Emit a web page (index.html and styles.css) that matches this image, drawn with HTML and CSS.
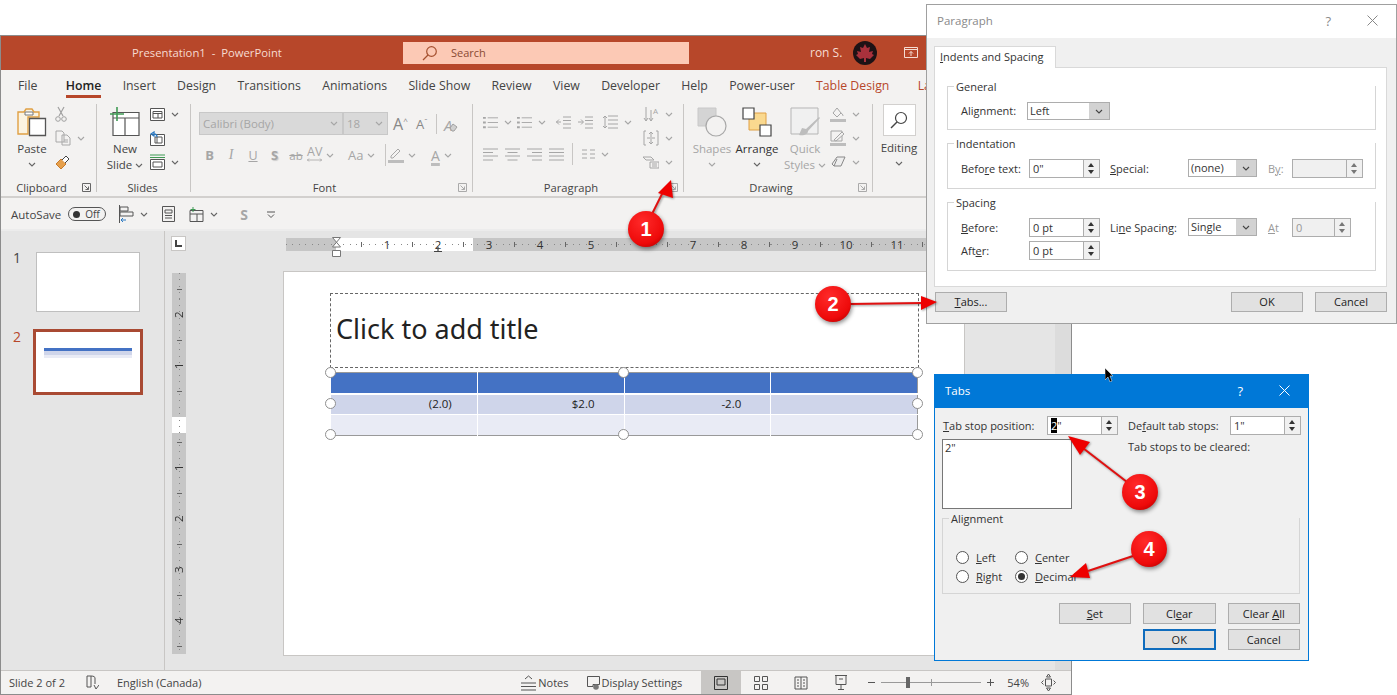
FILE: index.html
```html
<!DOCTYPE html>
<html>
<head>
    <title>Tabs in PowerPoint</title>
    <link rel="stylesheet" href="styles.css">
</head>
<body>
<svg class="defs" width="0" height="0">
    <symbol id="chev" viewBox="0 0 8 5"><path d="M1 1l3 3 3-3" fill="none" stroke="currentColor" stroke-width="1.1"/></symbol>
    <symbol id="launch" viewBox="0 0 9 9"><path d="M.5.5h8v8h-8zM2.5 2.5l4 4M6.5 3.5v3h-3" fill="none" stroke="currentColor"/></symbol>
    <symbol id="list" viewBox="0 0 16 16"><path d="M5 3h11M5 8h11M5 13h11" stroke="currentColor" fill="none"/><path d="M0 2h3v2H0zM0 7h3v2H0zM0 12h3v2H0z" fill="currentColor"/></symbol>
</svg>

<div class="pp">
    <div class="titlebar">
        <span class="doc-title">Presentation1&nbsp; -&nbsp; PowerPoint</span>
        <div class="search">
            <svg width="16" height="16" viewBox="0 0 16 16"><circle cx="9.5" cy="6.5" r="4.8" fill="none" stroke="#a5502f" stroke-width="1.2"/><path d="M6 10l-5 5" stroke="#a5502f" stroke-width="1.3"/></svg>
            <span>Search</span>
        </div>
        <span class="user">ron S.</span>
        <svg class="avatar" width="24" height="24" viewBox="0 0 24 24"><circle cx="12" cy="12" r="12" fill="#1d1215"/><path d="M12 3l2 4 3-1-1 5 4-1-1 3 2 1-4 4-4-1v4h-2v-4l-4 1-4-4 2-1-1-3 4 1-1-5 3 1z" fill="#a8313c"/></svg>
        <svg class="display-btn" width="14" height="11" viewBox="0 0 14 11"><path d="M.5.5h13v10H.5zM.5 2.5h13M7 9V4.5M5 6.5l2-2 2 2" fill="none" stroke="#f5dcd2"/></svg>
    </div>

    <div class="tabs">
        <span class="tab t-file">File</span>
        <span class="tab active">Home</span>
        <span class="tab">Insert</span>
        <span class="tab">Design</span>
        <span class="tab">Transitions</span>
        <span class="tab">Animations</span>
        <span class="tab">Slide Show</span>
        <span class="tab">Review</span>
        <span class="tab">View</span>
        <span class="tab">Developer</span>
        <span class="tab">Help</span>
        <span class="tab">Power-user</span>
        <span class="tab ctx">Table Design</span>
        <span class="tab ctx t-layout">Layout</span>
    </div>

    <div class="ribbon">
        <div class="group g-clip">
            <div class="g-body">
                <div class="big paste">
                    <svg width="30" height="30" viewBox="0 0 30 30"><path d="M1 5h6l2-3h6l2 3h5v5H11v17H1z" fill="#fbf3e2" stroke="#e0a044" stroke-width="1.4"/><path d="M8 5h8v3H8z" fill="#fff" stroke="#777"/><path d="M12.5 11.5h16v17h-16z" fill="#fff" stroke="#555" stroke-width="1.3"/></svg>
                    <span class="lbl">Paste</span>
                    <svg class="chev" width="8" height="5"><use href="#chev"/></svg>
                </div>
                <div class="stack s-clip">
                    <div class="stack-item off"><svg width="12" height="16" viewBox="0 0 12 16"><path d="M3 1l5 9M9 1L4 10" stroke="#a0a0a0" fill="none" stroke-width="1.2"/><circle cx="3" cy="13" r="2.3" fill="none" stroke="#a0a0a0"/><circle cx="9" cy="13" r="2.3" fill="none" stroke="#a0a0a0"/></svg></div>
                    <div class="stack-item off"><svg width="16" height="16" viewBox="0 0 16 16"><path d="M1 1h6l2 2v9H1z M7 5h5l3 3v7H7z" fill="#f3f2f1" stroke="#a8a8a8"/><path d="M9 10h4M9 12h4" stroke="#a8a8a8"/></svg><svg class="chev c-gap" width="8" height="5"><use href="#chev"/></svg></div>
                    <div class="stack-item"><svg width="16" height="16" viewBox="0 0 16 16"><path d="M1 10l5-5 5 5-5 5z" fill="#e6a04c" stroke="#c87b2a"/><path d="M7 6l4-4 3 3-4 4" fill="#fff" stroke="#444"/></svg></div>
                </div>
            </div>
            <div class="g-foot"><span class="g-name">Clipboard</span><svg class="launcher" width="9" height="9"><use href="#launch"/></svg></div>
        </div>

        <div class="group g-slides">
            <div class="g-body">
                <div class="big new-slide">
                    <svg width="30" height="30" viewBox="0 0 30 30"><path d="M3 5.5h26v23H3zM3 11h26M15 11v17" fill="#fff" stroke="#555" stroke-width="1.2"/><path d="M7 0v14M0 7h14" stroke="#3f9a54" stroke-width="1.6"/></svg>
                    <span class="lbl">New</span>
                    <span class="lbl">Slide <svg class="chev" width="8" height="5"><use href="#chev"/></svg></span>
                </div>
                <div class="stack">
                    <div class="stack-item"><svg width="15" height="13" viewBox="0 0 15 13"><path d="M.5.5h14v12H.5zM3 3.500h9V10H3zM3 5.500h9M8 5.500V10" fill="#fff" stroke="#555"/></svg><svg class="chev c-gap" width="8" height="5"><use href="#chev"/></svg></div>
                    <div class="stack-item"><svg width="15" height="15" viewBox="0 0 15 15"><path d="M.5 3.500h14v11H.5zM5 6h7v6H5zM7 6v6" fill="#fff" stroke="#555"/><path d="M1 3l3-2v4zM4 3c2 0 3 1 3 3" fill="none" stroke="#2b79c2" stroke-width="1.3"/></svg></div>
                    <div class="stack-item"><svg width="15" height="16" viewBox="0 0 15 16"><path d="M0 1h15M0 3.500h15" stroke="#3f9a54" stroke-width="1.2"/><path d="M.5 5.500h14v10H.5zM3 8h9v5H3z" fill="#fff" stroke="#555"/></svg><svg class="chev c-gap" width="8" height="5"><use href="#chev"/></svg></div>
                </div>
            </div>
            <div class="g-foot"><span class="g-name">Slides</span></div>
        </div>

        <div class="group g-font">
            <div class="g-body font-body">
                <div class="font-row1">
                    <div class="box box-font">Calibri (Body)<svg class="chev" width="8" height="5"><use href="#chev"/></svg></div>
                    <div class="box box-size">18<svg class="chev" width="8" height="5"><use href="#chev"/></svg></div>
                    <span class="grow-a">A<sup>^</sup></span>
                    <span class="shrink-a">A<sup>ˇ</sup></span>
                    <i class="vsep"></i>
                    <span class="clear-a">A<svg width="9" height="9" viewBox="0 0 9 9"><path d="M1 5l3-4 4 3-3 4H3z" fill="#d0d0d0" stroke="#a0a0a0"/></svg></span>
                </div>
                <div class="font-row2">
                    <b>B</b>
                    <i class="it">I</i>
                    <u>U</u>
                    <b class="shadow-s">S</b>
                    <s>ab</s>
                    <span class="av"><span class="spc">AV<svg width="15" height="4" viewBox="0 0 15 4"><path d="M0 2h15M2 .5L.5 2 2 3.500M13 .5L14.500 2 13 3.500" fill="none" stroke="#a6a6a6" stroke-width=".8"/></svg></span><svg class="chev" width="8" height="5"><use href="#chev"/></svg></span>
                    <span class="av aa"><span>Aa</span><svg class="chev" width="8" height="5"><use href="#chev"/></svg></span>
                    <i class="vsep tall"></i>
                    <span class="av"><svg width="16" height="16" viewBox="0 0 16 16"><path d="M3 9l7-7 2 2-7 7H3z" fill="none" stroke="#a8a8a8"/><path d="M0 13h16v3H0z" fill="#bdbdbd"/></svg><svg class="chev" width="8" height="5"><use href="#chev"/></svg></span>
                    <span class="av"><span class="color-a">A</span><svg class="chev" width="8" height="5"><use href="#chev"/></svg></span>
                </div>
            </div>
            <div class="g-foot"><span class="g-name">Font</span><svg class="launcher dim" width="9" height="9"><use href="#launch"/></svg></div>
        </div>

        <div class="group g-para">
            <div class="g-body">
                <div class="para-left">
                    <div class="para-row r1">
                        <svg width="15" height="15"><use href="#list"/></svg><svg class="chev c-gap" width="8" height="5"><use href="#chev"/></svg>
                        <svg class="m6" width="15" height="15"><use href="#list"/></svg><svg class="chev c-gap" width="8" height="5"><use href="#chev"/></svg>
                        <svg class="m10" width="15" height="13" viewBox="0 0 15 13"><path d="M7 1h8M7 4.500h8M7 8h8M7 12h8M0 6h5M3 3.500L.5 6 3 8.500" fill="none" stroke="currentColor"/></svg>
                        <svg class="m7" width="15" height="13" viewBox="0 0 15 13"><path d="M7 1h8M7 4.500h8M7 8h8M7 12h8M0 6h5M3 3.500L5.500 6 3 8.500" fill="none" stroke="currentColor"/></svg>
                        <svg class="m9" width="16" height="14" viewBox="0 0 16 14"><path d="M6 1h10M6 5h10M6 9h10M6 13h10M3 1v12M1 3l2-2 2 2M1 11l2 2 2-2" fill="none" stroke="currentColor"/></svg><svg class="chev c-gap" width="8" height="5"><use href="#chev"/></svg>
                    </div>
                    <div class="para-row r2">
                        <svg width="15" height="13" viewBox="0 0 15 13"><path d="M0 1h15M0 4.500h10M0 8h15M0 12h10" fill="none" stroke="currentColor"/></svg>
                        <svg class="m7" width="15" height="13" viewBox="0 0 15 13"><path d="M0 1h15M2.500 4.500h10M0 8h15M2.500 12h10" fill="none" stroke="currentColor"/></svg>
                        <svg class="m7" width="15" height="13" viewBox="0 0 15 13"><path d="M0 1h15M5 4.500h10M0 8h15M5 12h10" fill="none" stroke="currentColor"/></svg>
                        <svg class="m7" width="15" height="13" viewBox="0 0 15 13"><path d="M0 1h15M0 4.500h15M0 8h15M0 12h15" fill="none" stroke="currentColor"/></svg>
                        <i class="vsep tall m7"></i>
                        <svg class="m9" width="13" height="10" viewBox="0 0 13 10"><path d="M0 1h5M0 5h5M0 9h5M8 1h5M8 5h5M8 9h5" fill="none" stroke="currentColor"/></svg><svg class="chev c-gap" width="8" height="5"><use href="#chev"/></svg>
                    </div>
                </div>
                <div class="stack s-para off">
                    <div class="stack-item"><svg width="16" height="16" viewBox="0 0 16 16"><path d="M3 1v14M1 12l2 3 2-3M8 4v11M6 12l2 3 2-3" fill="none" stroke="currentColor"/><text x="10" y="8" font-size="8" fill="currentColor">A</text></svg><svg class="chev c-gap" width="8" height="5"><use href="#chev"/></svg></div>
                    <div class="stack-item"><svg width="16" height="16" viewBox="0 0 16 16"><path d="M3 1H1v14h2M13 1h2v14h-2M8 2v5M6 4l2-2 2 2M8 14V9M6 12l2 2 2-2M4 8h8" fill="none" stroke="currentColor"/></svg><svg class="chev c-gap" width="8" height="5"><use href="#chev"/></svg></div>
                    <div class="stack-item"><svg width="16" height="13" viewBox="0 0 16 13"><path d="M0 1h8l3 3H3zM7 6h9v6H7zM9 8h5M9 10h5" fill="none" stroke="currentColor"/></svg><svg class="chev c-gap" width="8" height="5"><use href="#chev"/></svg></div>
                </div>
            </div>
            <div class="g-foot"><span class="g-name">Paragraph</span><svg class="launcher dim" width="9" height="9"><use href="#launch"/></svg></div>
        </div>

        <div class="group g-draw">
            <div class="g-body">
                <div class="big b-shapes off">
                    <svg width="30" height="30" viewBox="0 0 30 30"><path d="M1 1h18v18H1z" fill="#d4d4d4" stroke="#c8c8c8"/><circle cx="19" cy="19" r="10" fill="#f3f2f1" stroke="#a8a8a8" stroke-width="1.2"/></svg>
                    <span class="lbl">Shapes</span>
                    <svg class="chev" width="8" height="5"><use href="#chev"/></svg>
                </div>
                <div class="big b-arrange">
                    <svg width="30" height="30" viewBox="0 0 30 30"><path d="M7 6h17v17H7z" fill="#fad98f" stroke="#e0a044"/><path d="M1 1h11v11H1zM18 18h11v11H18z" fill="#fff" stroke="#444" stroke-width="1.2"/></svg>
                    <span class="lbl">Arrange</span>
                    <svg class="chev" width="8" height="5"><use href="#chev"/></svg>
                </div>
                <div class="big b-quick off">
                    <svg width="30" height="30" viewBox="0 0 30 30"><path d="M1 1h27v26H1z" fill="#f0f0f0" stroke="#b5b5b5"/><path d="M29 10L16 22l-4-1-3 7c5 1 9-1 9-4l12-13z" fill="#bdbdbd"/></svg>
                    <span class="lbl">Quick</span>
                    <span class="lbl">Styles <svg class="chev" width="8" height="5"><use href="#chev"/></svg></span>
                </div>
                <div class="stack s-draw off">
                    <div class="stack-item"><svg width="16" height="16" viewBox="0 0 16 16"><path d="M3 7l4-5 4 5-4 4z M11 7c2 1 2 3 2 3" fill="none" stroke="currentColor"/><path d="M0 13h16v3H0z" fill="#bdbdbd"/></svg><svg class="chev c-gap" width="8" height="5"><use href="#chev"/></svg></div>
                    <div class="stack-item"><svg width="16" height="16" viewBox="0 0 16 16"><path d="M1 1h11v10H1z" fill="none" stroke="currentColor"/><path d="M4 10l8-8 2 2-8 7z" fill="#f3f2f1" stroke="currentColor"/><path d="M0 13h16v3H0z" fill="#bdbdbd"/></svg><svg class="chev c-gap" width="8" height="5"><use href="#chev"/></svg></div>
                    <div class="stack-item"><svg width="16" height="14" viewBox="0 0 16 14"><path d="M2 9l5-7h8l-4 9H4z M4 11l3-7" fill="#eee" stroke="#888"/></svg><svg class="chev c-gap" width="8" height="5"><use href="#chev"/></svg></div>
                </div>
            </div>
            <div class="g-foot"><span class="g-name">Drawing</span><svg class="launcher dim" width="9" height="9"><use href="#launch"/></svg></div>
        </div>

        <div class="big b-edit">
            <div class="edit-box"><svg width="18" height="18" viewBox="0 0 18 18"><circle cx="11" cy="7" r="5.500" fill="none" stroke="#444" stroke-width="1.200"/><path d="M7 11l-6 6" stroke="#444" stroke-width="1.400"/></svg></div>
            <span class="lbl">Editing</span>
            <svg class="chev" width="8" height="5"><use href="#chev"/></svg>
        </div>
    </div>

    <div class="qat">
        <span class="autosave">AutoSave</span>
        <div class="toggle"><i></i><span>Off</span></div>
        <svg class="q-a" width="15" height="18" viewBox="0 0 15 18"><path d="M.5 0v18" stroke="#555"/><path d="M1 2h8v4H1zM1 7h13v4H1z" fill="none" stroke="#555"/><path d="M7 15H2M4 13l-2 2 2 2" fill="none" stroke="#2b79c2"/></svg>
        <svg class="chev c-gap" width="8" height="5"><use href="#chev"/></svg>
        <svg class="q-b" width="13" height="16" viewBox="0 0 13 16"><path d="M.5.500h12v15H.5zM3 4h7v3H3zM3 9.500h7M3 12h7" fill="none" stroke="#555"/></svg>
        <svg class="q-c" width="15" height="15" viewBox="0 0 15 15"><path d="M1 3.500h13v11H1zM1 7h13M8 7v7" fill="none" stroke="#555"/><path d="M4 0v5M1.500 2.500h5" stroke="#3f9a54"/></svg>
        <svg class="chev c-gap" width="8" height="5"><use href="#chev"/></svg>
        <b class="q-s">S</b>
        <svg class="q-more" width="8" height="7" viewBox="0 0 8 7"><path d="M0 1h8M1 3.500l3 3 3-3" fill="none" stroke="#555"/></svg>
    </div>

    <div class="work">
        <div class="thumbs">
            <div class="thumb-row"><span class="num">1</span><div class="thumb"></div></div>
            <div class="thumb-row cur">
                <span class="num">2</span>
                <div class="thumb">
                    <div class="mini">
                        <i class="m-head"></i>
                        <i class="m-row"></i>
                        <i class="m-alt"></i>
                    </div>
                </div>
            </div>
        </div>

        <div class="editor">
            <div class="top-ruler">
                <div class="corner"><svg width="7" height="7" viewBox="0 0 7 7"><path d="M1 0v6h6" fill="none" stroke="#444" stroke-width="2"/></svg></div>
                <div class="h-ruler">
                    <span>1</span><span>2</span><span>3</span><span>4</span><span>5</span><span></span><span>7</span><span>8</span><span>9</span><span>10</span><span>11</span>
                    <svg class="indent" width="9" height="20" viewBox="0 0 9 20"><path d="M.5.500h8L.5 10h8L.5.500M.5 13.500h8v6h-8z" fill="#fff" stroke="#777"/></svg>
                    <svg class="tabmark" width="10" height="5" viewBox="0 0 10 5"><path d="M1 4.500h8M5 0v4" stroke="#444" stroke-width="1.200"/></svg>
                </div>
            </div>
            <div class="canvas">
                <div class="v-ruler">
                    <span>2</span><span>1</span><span class="zero"></span><span>1</span><span>2</span><span>3</span><span>4</span>
                </div>
                <div class="slide">
                    <div class="title-ph">Click to add title</div>
                    <div class="table-wrap">
                        <table class="tbl">
                            <tr class="tr-head"><td></td><td></td><td></td><td></td></tr>
                            <tr class="tr-a"><td class="c1">(2.0)</td><td class="c2">$2.0</td><td class="c3">-2.0</td><td></td></tr>
                            <tr class="tr-b"><td></td><td></td><td></td><td></td></tr>
                        </table>
                        <i class="h h-tl"></i><i class="h h-tc"></i><i class="h h-tr"></i>
                        <i class="h h-ml"></i><i class="h h-mr"></i>
                        <i class="h h-bl"></i><i class="h h-bc"></i><i class="h h-br"></i>
                    </div>
                </div>
                <div class="scroll-gap"></div>
                <div class="scrollbar"></div>
            </div>
        </div>
    </div>

    <div class="status">
        <span class="st-slide">Slide 2 of 2</span>
        <svg class="st-book" width="13" height="15" viewBox="0 0 13 15"><path d="M1 1h4v11H1zM5 1c3 0 4 1 4 2v6M8 10l2 4 3-4" fill="none" stroke="#555"/></svg>
        <span class="st-lang">English (Canada)</span>
        <div class="st-right">
            <svg class="st-notes" width="15" height="16" viewBox="0 0 15 16"><path d="M0 8h15M0 11.500h15M0 15h15M4 4l3.500-3L11 4" fill="none" stroke="#555"/></svg>
            <span class="st-txt">Notes</span>
            <svg class="st-disp" width="13" height="14" viewBox="0 0 13 14"><path d="M.5.500h12v8H6v2H.5z" fill="none" stroke="#555"/><circle cx="9" cy="11" r="2.800" fill="#777"/></svg>
            <span class="st-txt">Display Settings</span>
            <div class="view on"><svg width="14" height="14" viewBox="0 0 14 14"><path d="M.5.500h13v13H.5zM3 3h8v6H3z" fill="none" stroke="#333"/></svg></div>
            <div class="view"><svg width="14" height="14" viewBox="0 0 14 14"><path d="M.5.500h5v5h-5zM8.500.500h5v5h-5zM.5 8.500h5v5h-5zM8.500 8.500h5v5h-5z" fill="none" stroke="#555"/></svg></div>
            <div class="view"><svg width="14" height="14" viewBox="0 0 14 14"><path d="M1 1h12v12H1zM7 1v12M3 4h2M3 7h2M3 10h2M9 4h2M9 7h2M9 10h2" fill="none" stroke="#555"/></svg></div>
            <div class="view"><svg width="14" height="15" viewBox="0 0 14 15"><path d="M1 .500h12M2 .500h10v9H2zM7 9.500V15M4 14.500h6M5 4h4" fill="none" stroke="#555"/></svg></div>
            <div class="zoom">
                <span class="z-minus"></span>
                <div class="z-track"><i class="z-knob"></i><i class="z-mid"></i></div>
                <span class="z-plus"></span>
            </div>
            <span class="st-pct">54%</span>
            <svg class="st-fit" width="15" height="17" viewBox="0 0 15 17"><path d="M4.500 5h6v7h-6zM7.500 0l2 3h-4zM7.500 17l2-3h-4zM2.500 6.500L.5 8.500l2 2M12.500 6.500l2 2-2 2" fill="none" stroke="#555"/></svg>
        </div>
    </div>
</div>

<div class="dialog para-dlg">
    <div class="dlg-title">
        <span>Paragraph</span>
        <span class="dlg-q">?</span>
        <svg class="dlg-x" width="11" height="11" viewBox="0 0 11 11"><path d="M.5.500l10 10M10.500.500l-10 10" stroke="#888"/></svg>
    </div>
    <div class="para-tab"><u>I</u>ndents and Spacing</div>
    <div class="para-panel">
        <div class="grp g-general">
            <span class="legend">General</span>
            <div class="grp-grid g-one">
                <span>Ali<u>g</u>nment:</span>
                <div class="combo c-align"><span>Left</span><i class="combo-btn"><svg class="chev" width="8" height="5"><use href="#chev"/></svg></i></div>
            </div>
        </div>
        <div class="grp g-indent">
            <span class="legend">Indentation</span>
            <div class="grp-grid">
                <span>Befo<u>r</u>e text:</span>
                <div class="spin"><span>0"</span><i class="spin-btn"></i></div>
                <span><u>S</u>pecial:</span>
                <div class="combo"><span>(none)</span><i class="combo-btn"><svg class="chev" width="8" height="5"><use href="#chev"/></svg></i></div>
                <span class="dis">B<u>y</u>:</span>
                <div class="spin dis-box"><span></span><i class="spin-btn"></i></div>
            </div>
        </div>
        <div class="grp g-spacing">
            <span class="legend">Spacing</span>
            <div class="grp-grid">
                <span><u>B</u>efore:</span>
                <div class="spin"><span>0 pt</span><i class="spin-btn"></i></div>
                <span>Li<u>n</u>e Spacing:</span>
                <div class="combo"><span>Single</span><i class="combo-btn"><svg class="chev" width="8" height="5"><use href="#chev"/></svg></i></div>
                <span class="dis"><u>A</u>t</span>
                <div class="spin dis-box s-at"><span class="dis">0</span><i class="spin-btn"></i></div>
                <span>Aft<u>e</u>r:</span>
                <div class="spin"><span>0 pt</span><i class="spin-btn"></i></div>
            </div>
        </div>
    </div>
    <div class="dlg-foot">
        <div class="btn"><u>T</u>abs...</div>
        <div class="btn b-ok">OK</div>
        <div class="btn">Cancel</div>
    </div>
</div>

<div class="dialog tabs-dlg">
    <div class="dlg-title blue">
        <span>Tabs</span>
        <span class="dlg-q">?</span>
        <svg class="dlg-x" width="11" height="11" viewBox="0 0 11 11"><path d="M.5.500l10 10M10.500.500l-10 10" stroke="#fff"/></svg>
    </div>
    <div class="tabs-body">
        <div class="t-row">
            <span class="t-lab1"><u>T</u>ab stop position:</span>
            <div class="spin"><span><mark>2</mark>"</span><i class="spin-btn"></i></div>
            <span class="t-lab2">De<u>f</u>ault tab stops:</span>
            <div class="spin"><span>1"</span><i class="spin-btn"></i></div>
        </div>
        <div class="t-row2">
            <div class="listbox">2"</div>
            <span class="t-clear">Tab stops to be cleared:</span>
        </div>
        <div class="grp g-align">
            <span class="legend">Alignment</span>
            <div class="radios">
                <label class="radio"><i></i><span><u>L</u>eft</span></label>
                <label class="radio"><i></i><span><u>C</u>enter</span></label>
                <label class="radio"><i></i><span><u>R</u>ight</span></label>
                <label class="radio sel"><i></i><span><u>D</u>ecimal</span></label>
            </div>
        </div>
        <div class="t-btns">
            <div class="btn"><u>S</u>et</div>
            <div class="btn">Cl<u>e</u>ar</div>
            <div class="btn">Clear <u>A</u>ll</div>
        </div>
        <div class="t-btns second">
            <div class="btn def">OK</div>
            <div class="btn">Cancel</div>
        </div>
    </div>
</div>

<svg class="cursor" width="9" height="14" viewBox="0 0 9 14"><path d="M0 0l8 8H5l2 5-2 1-2-5-3 3z" fill="#000" stroke="#fff" stroke-width=".5"/></svg>

<svg class="marks" width="1397" height="695" viewBox="0 0 1397 695">
    <defs>
        <radialGradient id="red" cx=".4" cy=".3" r=".8">
            <stop offset="0" stop-color="#ff2a2a"/>
            <stop offset=".75" stop-color="#ee0a0a"/>
            <stop offset="1" stop-color="#c00000"/>
        </radialGradient>
    </defs>
    <g class="arrow">
        <path d="M652 214L664 190" />
        <path d="M671 180L673 198 658 193z" class="head"/>
        <path d="M850 304L922 303"/>
        <path d="M937 302L921 296 921 310z" class="head"/>
        <path d="M1127 482L1079 445"/>
        <path d="M1068 436L1090 442 1080 455z" class="head"/>
        <path d="M1133 556L1088 571"/>
        <path d="M1070 577L1086 563 1090 578z" class="head"/>
    </g>
    <g class="spot">
        <circle cx="646" cy="229" r="18" fill="url(#red)"/>
        <circle cx="833" cy="304" r="18" fill="url(#red)"/>
        <circle cx="1140" cy="492" r="18" fill="url(#red)"/>
        <circle cx="1149" cy="549" r="18" fill="url(#red)"/>
    </g>
    <g class="spot-num">
        <text x="646" y="236">1</text>
        <text x="833" y="311">2</text>
        <text x="1140" y="499">3</text>
        <text x="1149" y="556">4</text>
    </g>
</svg>
</body>
</html>
```

FILE: styles.css
```css
* {
    box-sizing: border-box;
}
html, body {
    margin: 0;
    height: 695px;
    overflow: hidden;
}
body {
    position: relative;
    width: 1397px;
    background: #fff;
    font-family: "Open Sans", "Noto Sans", sans-serif;
    font-size: 12px;
    color: #444;
}
.defs {
    position: absolute;
}
svg {
    display: block;
    flex: none;
}
i {
    font-style: normal;
}

/* powerpoint window */
.pp {
    position: absolute;
    left: 0;
    top: 35px;
    width: 1072px;
    height: 660px;
    border: 1px solid #8c8c8c;
    background: #f3f2f1;
    overflow: hidden;
    display: flex;
    flex-direction: column;
}
.titlebar {
    height: 34px;
    flex: none;
    background: #b7472a;
    color: #f6dcd2;
    display: flex;
    align-items: center;
    padding-bottom: 1px;
    padding-left: 131px;
}
.doc-title {
    width: 271px;
    white-space: nowrap;
    font-size: 11.3px;
}
.search {
    width: 286px;
    height: 22px;
    background: #fcc9b5;
    color: #8a4a33;
    display: flex;
    align-items: center;
    gap: 13px;
    padding-left: 19px;
    font-size: 11px;
}
.user {
    margin-left: 121px;
}
.avatar {
    margin-left: 11px;
}
.display-btn {
    margin-left: 27px;
}

.tabs {
    height: 28px;
    flex: none;
    display: flex;
    gap: 21.3px;
    padding-left: 17px;
    white-space: nowrap;
    font-size: 12.3px;
}
.tab {
    line-height: 31px;
    height: 28px;
}
.t-file {
    margin-right: 7px;
}
.t-layout {
    margin-left: 7px;
}
.tab.active {
    color: #222;
    font-weight: 600;
    border-bottom: 3px solid #b7472a;
}
.ctx {
    color: #b7472a;
}

.ribbon {
    height: 100px;
    flex: none;
    display: flex;
    border-bottom: 2px solid #d2d0ce;
    white-space: nowrap;
}
.group {
    display: flex;
    flex-direction: column;
    height: 98px;
    position: relative;
}
.group::after {
    content: "";
    position: absolute;
    right: 0;
    top: 6px;
    bottom: 4px;
    border-right: 1px solid #c8c6c4;
}
.g-clip { width: 96px; }
.g-slides { width: 94px; }
.g-font { width: 282px; }
.g-para { width: 211px; }
.g-draw { width: 189px; }
.g-body {
    height: 82px;
    display: flex;
    padding-top: 9px;
}
.g-foot {
    height: 15px;
    display: flex;
    align-items: center;
    padding-right: 3px;
}
.g-name {
    flex: 1;
    text-align: center;
    font-size: 11.2px;
}
.launcher {
    color: #666;
    margin-right: 3px;
}
.launcher.dim {
    color: #aaa;
}
.big {
    display: flex;
    flex-direction: column;
    align-items: center;
    flex: none;
    font-size: 11.5px;
}
.big > svg:first-child {
    margin-bottom: 4px;
}
.lbl {
    line-height: 16px;
    display: flex;
    align-items: center;
    gap: 3px;
}
.big .chev {
    margin-top: 5px;
}
.lbl .chev {
    margin-top: 1px !important;
}
.chev {
    width: 8px;
    height: 5px;
    color: #666;
}
.c-gap {
    margin-left: 6px;
}
.stack {
    display: flex;
    flex-direction: column;
    margin-top: -5px;
    flex: none;
}
.stack-item {
    height: 24px;
    display: flex;
    align-items: center;
}
.off, .off .chev, .off .lbl {
    color: #a6a6a6;
}
.paste {
    width: 36px;
    margin-left: 13px;
}
.s-clip {
    margin-left: 5px;
}
.new-slide {
    width: 40px;
    margin-left: 8px;
}
.g-slides .stack {
    margin-left: 5px;
}
.font-body {
    display: block;
    padding-left: 8px;
    padding-top: 14px;
}
.font-row1 {
    display: flex;
    align-items: center;
    height: 23px;
    color: #8a8a8a;
}
.box {
    height: 23px;
    background: #d9d9d9;
    border: 1px solid #c8c8c8;
    color: #a6a6a6;
    display: flex;
    align-items: center;
    justify-content: space-between;
    padding: 0 4px 0 3px;
    font-size: 11.5px;
}
.box .chev {
    color: #a6a6a6;
}
.box-font {
    width: 144px;
}
.box-size {
    width: 45px;
}
.grow-a, .shrink-a {
    font-size: 16px;
    color: #888;
    margin-left: 5px;
    width: 18px;
    line-height: 20px;
}
.shrink-a {
    font-size: 13px;
    margin-left: 5px;
    width: 17px;
}
sup {
    font-size: 8px;
    line-height: 0;
}
.vsep {
    display: block;
    width: 1px;
    height: 20px;
    background: #c8c6c4;
    margin-left: 3px;
    flex: none;
}
.vsep.tall {
    height: 22px;
}
.clear-a {
    margin-left: 7px;
    font-size: 15px;
    font-style: italic;
    color: #a6a6a6;
    display: flex;
    align-items: flex-end;
    margin-top: 3px;
}
.clear-a svg {
    margin-left: -3px;
    margin-bottom: 3px;
}
.font-row2 {
    display: grid;
    grid-template-columns: 21px 22px 22px 21px 22px 37px 38px 6px 37px 37px;
    align-items: center;
    justify-items: center;
    margin-top: 8px;
    height: 24px;
    color: #a6a6a6;
    font-size: 12.5px;
}
.font-row2 .vsep {
    margin: 0;
}
.font-row2 b {
    font-size: 13px;
}
.it {
    font-family: "Liberation Serif", serif;
    font-style: italic;
    font-size: 14px;
}
.shadow-s {
    text-shadow: 1px 1px 1px #ccc;
}
.font-row2 s {
    font-size: 11.5px;
}
.av {
    display: flex;
    align-items: center;
    gap: 4px;
    justify-self: start;
}
.spc {
    display: flex;
    flex-direction: column;
    align-items: center;
    line-height: 12px;
    margin-top: -2px;
}
.av .chev {
    color: #a6a6a6;
}
.aa {
    margin-left: 4px;
    font-size: 13px;
}
.color-a {
    text-decoration: underline;
    text-decoration-thickness: 3px;
    text-decoration-color: #bdbdbd;
    margin-left: 6px;
    font-size: 14px;
}

.para-left {
    width: 170px;
    padding-left: 10px;
    flex: none;
    color: #a6a6a6;
}
.para-row {
    display: flex;
    align-items: center;
    height: 20px;
}
.para-row .chev {
    color: #a6a6a6;
}
.r1 {
    margin-top: 5px;
}
.r2 {
    margin-top: 12px;
}
.m6 { margin-left: 5px; }
.m7 { margin-left: 7px; }
.m9 { margin-left: 9px; }
.m10 { margin-left: 10px; }
.r2 .vsep {
    margin-left: 8px;
}
.s-para {
    margin-left: 0;
}
.b-shapes {
    width: 44px;
    margin-left: 6px;
}
.b-arrange {
    width: 44px;
    margin-left: 1px;
    color: #333;
}
.b-quick {
    width: 44px;
    margin-left: 4px;
}
.s-draw {
    margin-left: 3px;
}
.b-edit {
    width: 52px;
    margin-left: 0;
    padding-top: 6px;
}
.edit-box {
    width: 33px;
    height: 32px;
    background: #fff;
    border: 1px solid #d2d0ce;
    display: flex;
    align-items: center;
    justify-content: center;
    margin-bottom: 4px;
}

.qat {
    height: 31px;
    flex: none;
    display: flex;
    align-items: center;
    padding-left: 10px;
    padding-top: 1px;
    font-size: 11.5px;
}
.toggle {
    width: 38px;
    height: 14px;
    border: 1px solid #555;
    border-radius: 7px;
    margin-left: 7px;
    display: flex;
    align-items: center;
    padding-left: 4px;
    gap: 5px;
    font-size: 10px;
}
.toggle i {
    width: 7px;
    height: 7px;
    border-radius: 50%;
    background: #333;
}
.q-a { margin-left: 13px; }
.q-b { margin-left: 14px; }
.q-c { margin-left: 14px; }
.q-s {
    margin-left: 22px;
    font-size: 14px;
    color: #a6a6a6;
}
.q-more { margin-left: 19px; }

/* work area */
.work {
    flex: 1;
    display: flex;
    background: #e5e5e5;
    min-height: 0;
    overflow: hidden;
    border-top: 2px solid #ececec;
}
.thumbs {
    width: 164px;
    flex: none;
    border-right: 1px solid #c8c6c4;
    padding-top: 21px;
}
.thumb-row {
    display: flex;
    padding-left: 12px;
    margin-bottom: 17px;
}
.num {
    width: 23px;
    font-size: 14px;
    line-height: 16px;
    margin-top: -2px;
}
.thumb {
    width: 104px;
    height: 60px;
    background: #fff;
    border: 1px solid #bfbfbf;
}
.cur .num {
    width: 20px;
    color: #b7472a;
    margin-top: 0;
}
.cur .thumb {
    width: 110px;
    height: 66px;
    border: 3px solid #a94a33;
    padding: 16px 8px 0;
}
.mini {
    display: flex;
    flex-direction: column;
}
.mini i {
    display: block;
    height: 3px;
}
.m-head { background: #4472c4; }
.m-row { background: #cfd5ea; height: 4px !important; }
.m-alt { background: #e9ebf5; }

.editor {
    flex: 1;
    min-width: 0;
    padding-left: 6px;
    padding-top: 5px;
}
.top-ruler {
    display: flex;
    height: 15px;
}
.corner {
    width: 15px;
    height: 15px;
    background: #fff;
    border: 1px solid #c8c6c4;
    display: flex;
    align-items: center;
    justify-content: center;
}
.h-ruler {
    margin-left: 100px;
    width: 650px;
    height: 13px;
    margin-top: 2px;
    position: relative;
    display: flex;
    padding-left: 75.5px;
    font-size: 11.5px;
    line-height: 13px;
    color: #333;
    background:
        repeating-linear-gradient(90deg, #666 0 1px, transparent 1px 51px) 75px 50% / 100% 5px no-repeat,
        repeating-linear-gradient(90deg, #888 0 1px, transparent 1px 6.375px) 0 50% / 100% 1px no-repeat,
        linear-gradient(90deg, #c6c6c6 0 50px, #fff 50px 187px, #c6c6c6 187px);
}
.h-ruler span {
    width: 51px;
    flex: none;
    text-align: center;
}
.indent {
    position: absolute;
    left: 46px;
    top: -1px;
}
.tabmark {
    position: absolute;
    left: 147px;
    top: 9px;
}
.canvas {
    display: flex;
    margin-top: 20px;
    height: 399px;
}
.v-ruler {
    width: 14px;
    height: 381px;
    margin-top: 2px;
    margin-left: 1px;
    flex: none;
    display: flex;
    flex-direction: column;
    align-items: center;
    padding-top: 16px;
    font-size: 11.5px;
    color: #333;
    background:
        repeating-linear-gradient(180deg, #666 0 1px, transparent 1px 51px) 50% 16px / 5px 100% no-repeat,
        repeating-linear-gradient(180deg, #888 0 1px, transparent 1px 6.375px) 50% 0 / 1px 100% no-repeat,
        linear-gradient(180deg, #c6c6c6 0 144px, #fff 144px 160px, #c6c6c6 160px);
}
.v-ruler span {
    height: 51px;
    flex: none;
    display: flex;
    align-items: center;
    justify-content: center;
    writing-mode: vertical-rl;
    transform: rotate(180deg);
    line-height: 14px;
}
.slide {
    width: 682px;
    height: 385px;
    margin-left: 97px;
    flex: none;
    background: #fff;
    border: 1px solid #c8c6c4;
    padding: 21px 0 0 46px;
}
.title-ph {
    width: 589px;
    height: 75px;
    border: 1px dashed #666;
    font-family: "Noto Sans", sans-serif;
    font-size: 27px;
    line-height: 69px;
    padding-left: 5px;
    color: #222;
}
.table-wrap {
    position: relative;
    width: 588px;
    margin-top: 4px;
}
.tbl {
    width: 588px;
    height: 63px;
    border-collapse: collapse;
    table-layout: fixed;
    border: 1px solid #999;
    font-size: 11.5px;
    color: #222;
}
.tbl td {
    border-left: 1px solid #fff;
    border-bottom: 1px solid #fff;
    padding: 0 0 2px;
    text-align: right;
    height: 21px;
}
.tr-head td { background: #4472c4; border-bottom-width: 2px; }
.tr-a td { background: #cfd5ea; }
.tr-b td { background: #e9ebf5; border-bottom: 0; }
.c1 { padding-right: 25px !important; }
.c2 { padding-right: 29px !important; }
.c3 { padding-right: 29px !important; }
.h {
    position: absolute;
    width: 11px;
    height: 11px;
    margin: -5px 0 0 -5px;
    border-radius: 50%;
    background: #fff;
    border: 1px solid #8f8f8f;
}
.h-tl { left: 0; top: 0; }
.h-tc { left: 293px; top: 0; }
.h-tr { left: 587px; top: 0; }
.h-ml { left: 0; top: 31px; }
.h-mr { left: 587px; top: 31px; }
.h-bl { left: 0; top: 62px; }
.h-bc { left: 293px; top: 62px; }
.h-br { left: 587px; top: 62px; }
.scroll-gap {
    width: 90px;
    flex: none;
}
.scrollbar {
    flex: 1;
    background: #dcdcdc;
}

.status {
    height: 24px;
    flex: none;
    display: flex;
    align-items: center;
    border-top: 1px solid #c8c6c4;
    font-size: 11px;
    padding-left: 8px;
    color: #444;
    white-space: nowrap;
}
.st-slide {
    width: 77px;
}
.st-lang {
    margin-left: 18px;
}
.st-right {
    margin-left: auto;
    display: flex;
    align-items: center;
    height: 23px;
}
.st-txt {
    margin-left: 2px;
}
.st-disp {
    margin-left: 18px;
}
.view {
    width: 40px;
    height: 23px;
    display: flex;
    align-items: center;
    justify-content: center;
}
.view.on {
    margin-left: 19px;
    background: #c8c6c4;
}
.zoom {
    display: flex;
    align-items: center;
    margin-left: 7px;
}
.z-minus, .z-plus {
    width: 7px;
    height: 1px;
    background: #555;
    position: relative;
}
.z-plus::after {
    content: "";
    position: absolute;
    left: 3px;
    top: -3px;
    width: 1px;
    height: 7px;
    background: #555;
}
.z-track {
    width: 100px;
    height: 1px;
    margin: 0 6px;
    background: #999;
    position: relative;
}
.z-knob {
    position: absolute;
    left: 25px;
    top: -5px;
    width: 4px;
    height: 11px;
    background: #666;
}
.z-mid {
    position: absolute;
    left: 50px;
    top: -3px;
    width: 1px;
    height: 7px;
    background: #999;
}
.st-pct {
    margin-left: 13px;
}
.st-fit {
    margin-left: 12px;
    margin-right: 15px;
}

/* dialogs */
.dialog {
    position: absolute;
    background: #f0f0f0;
    font-size: 11px;
    color: #333;
    white-space: nowrap;
}
.dlg-title {
    height: 33px;
    background: #fff;
    display: flex;
    align-items: center;
    padding-left: 10px;
    padding-bottom: 2px;
    color: #8a8a8a;
    font-size: 11.5px;
}
.dlg-q {
    margin-left: auto;
    font-size: 13px;
}
.dlg-x {
    margin-left: 36px;
    margin-right: 18px;
}
.dlg-title.blue {
    background: #0078d7;
    color: #fff;
}
.para-dlg {
    left: 926px;
    top: 4px;
    width: 471px;
    height: 320px;
    border: 1px solid #a0a0a0;
}
.para-tab {
    width: 122px;
    height: 22px;
    margin: 8px 0 0 7px;
    background: #fff;
    border: 1px solid #d9d9d9;
    border-bottom: 0;
    line-height: 20px;
    padding-left: 5px;
    position: relative;
    z-index: 1;
}
.para-panel {
    width: 453px;
    height: 220px;
    margin: -1px 0 0 7px;
    background: #fff;
    border: 1px solid #d9d9d9;
    padding: 18px 0 0 12px;
}
.grp {
    position: relative;
    width: 429px;
    border: 1px solid #d5d5d5;
    border-top: 0;
    margin-bottom: 13px;
    padding: 16px 0 0 13px;
}
.grp::before {
    content: "";
    position: absolute;
    left: -1px;
    top: 0;
    width: 7px;
    border-top: 1px solid #d5d5d5;
}
.legend {
    position: absolute;
    left: 8px;
    top: -7px;
    line-height: 15px;
}
.g-general { height: 44px; }
.g-indent { height: 46px; }
.g-spacing { height: 69px; }
.grp-grid {
    display: grid;
    grid-template-columns: 68px 81px 78px 80px 24px 70px;
    row-gap: 4px;
    align-items: start;
}
.grp-grid > span {
    line-height: 19px;
}
.g-one {
    grid-template-columns: 66px 83px;
}
.g-general .grp-grid > span {
    line-height: 18px;
}
.dis {
    color: #999;
}
.spin {
    width: 71px;
    height: 19px;
    background: #fff;
    border: 1px solid #adadad;
    display: flex;
    justify-content: space-between;
    line-height: 17px;
    padding-left: 3px;
}
.spin mark {
    background: #000;
    color: #fff;
}
.spin-btn {
    width: 16px;
    height: 17px;
    background: #f0f0f0;
    border-left: 1px solid #adadad;
    position: relative;
}
.spin-btn::before, .spin-btn::after {
    content: "";
    position: absolute;
    left: 4px;
    border-left: 3.5px solid transparent;
    border-right: 3.5px solid transparent;
}
.spin-btn::before {
    top: 3px;
    border-bottom: 4px solid #333;
}
.spin-btn::after {
    bottom: 3px;
    border-top: 4px solid #333;
}
.dis-box {
    background: #f0f0f0;
}
.dis-box .spin-btn::before {
    border-bottom-color: #777;
}
.dis-box .spin-btn::after {
    border-top-color: #777;
}
.s-at {
    width: 59px;
}
.combo {
    width: 69px;
    height: 18px;
    background: #fff;
    border: 1px solid #adadad;
    display: flex;
    justify-content: space-between;
    line-height: 16px;
    padding-left: 2px;
}
.c-align {
    width: 83px;
}
.combo-btn {
    width: 20px;
    background: #d2d2d2;
    display: flex;
    align-items: center;
    justify-content: center;
}
.combo-btn .chev {
    color: #444;
}
.dlg-foot {
    display: flex;
    gap: 12px;
    padding: 5px 9px 0 8px;
}
.btn {
    width: 72px;
    height: 20px;
    background: #e1e1e1;
    border: 1px solid #adadad;
    text-align: center;
    line-height: 18px;
    color: #222;
}
.b-ok {
    margin-left: auto;
}

.tabs-dlg {
    left: 934px;
    top: 374px;
    width: 375px;
    height: 287px;
    border: 1px solid #0078d7;
}
.tabs-body {
    padding: 8px 0 0 7px;
}
.t-row {
    display: flex;
    line-height: 19px;
}
.t-lab1 {
    width: 105px;
    padding-left: 1px;
}
.t-lab2 {
    width: 102px;
    margin-left: 10px;
}
.t-row2 {
    display: flex;
    margin-top: 4px;
}
.listbox {
    width: 130px;
    height: 70px;
    background: #fff;
    border: 1px solid #777;
    padding: 0 2px;
}
.t-clear {
    margin-left: 56px;
}
.g-align {
    width: 358px;
    height: 76px;
    margin: 9px 0 0;
    padding: 30px 0 0 13px;
}
.radios {
    display: grid;
    grid-template-columns: 59px 80px;
    grid-auto-rows: 19px;
}
.radio {
    display: flex;
    align-items: center;
    gap: 7px;
}
.radio i {
    width: 13px;
    height: 13px;
    border-radius: 50%;
    background: #fff;
    border: 1px solid #555;
    position: relative;
}
.radio.sel i::after {
    content: "";
    position: absolute;
    left: 2px;
    top: 2px;
    width: 7px;
    height: 7px;
    border-radius: 50%;
    background: #333;
}
.t-btns {
    display: flex;
    justify-content: flex-end;
    gap: 12px;
    margin-top: 9px;
    padding-right: 8px;
}
.t-btns .btn {
    height: 21px;
    line-height: 19px;
    width: 72.500px;
}
.t-btns.second {
    margin-top: 5px;
}
.btn.def {
    border: 2px solid #0f6cbd;
    line-height: 17px !important;
}

/* callouts over everything */
.cursor {
    position: absolute;
    left: 1105px;
    top: 368px;
}
.marks {
    position: absolute;
    left: 0;
    top: 0;
    pointer-events: none;
}
.arrow {
    stroke: #e01010;
    stroke-width: 2;
    fill: none;
    filter: drop-shadow(1px 1px 1px rgba(0, 0, 0, .4));
}
.arrow .head {
    fill: #ee0000;
    stroke: none;
}
.spot {
    filter: drop-shadow(1px 2px 2px rgba(0, 0, 0, .45));
}
.spot-num {
    font-family: "Liberation Sans", sans-serif;
    font-weight: 700;
    font-size: 20px;
    fill: #fff;
    text-anchor: middle;
}
```
